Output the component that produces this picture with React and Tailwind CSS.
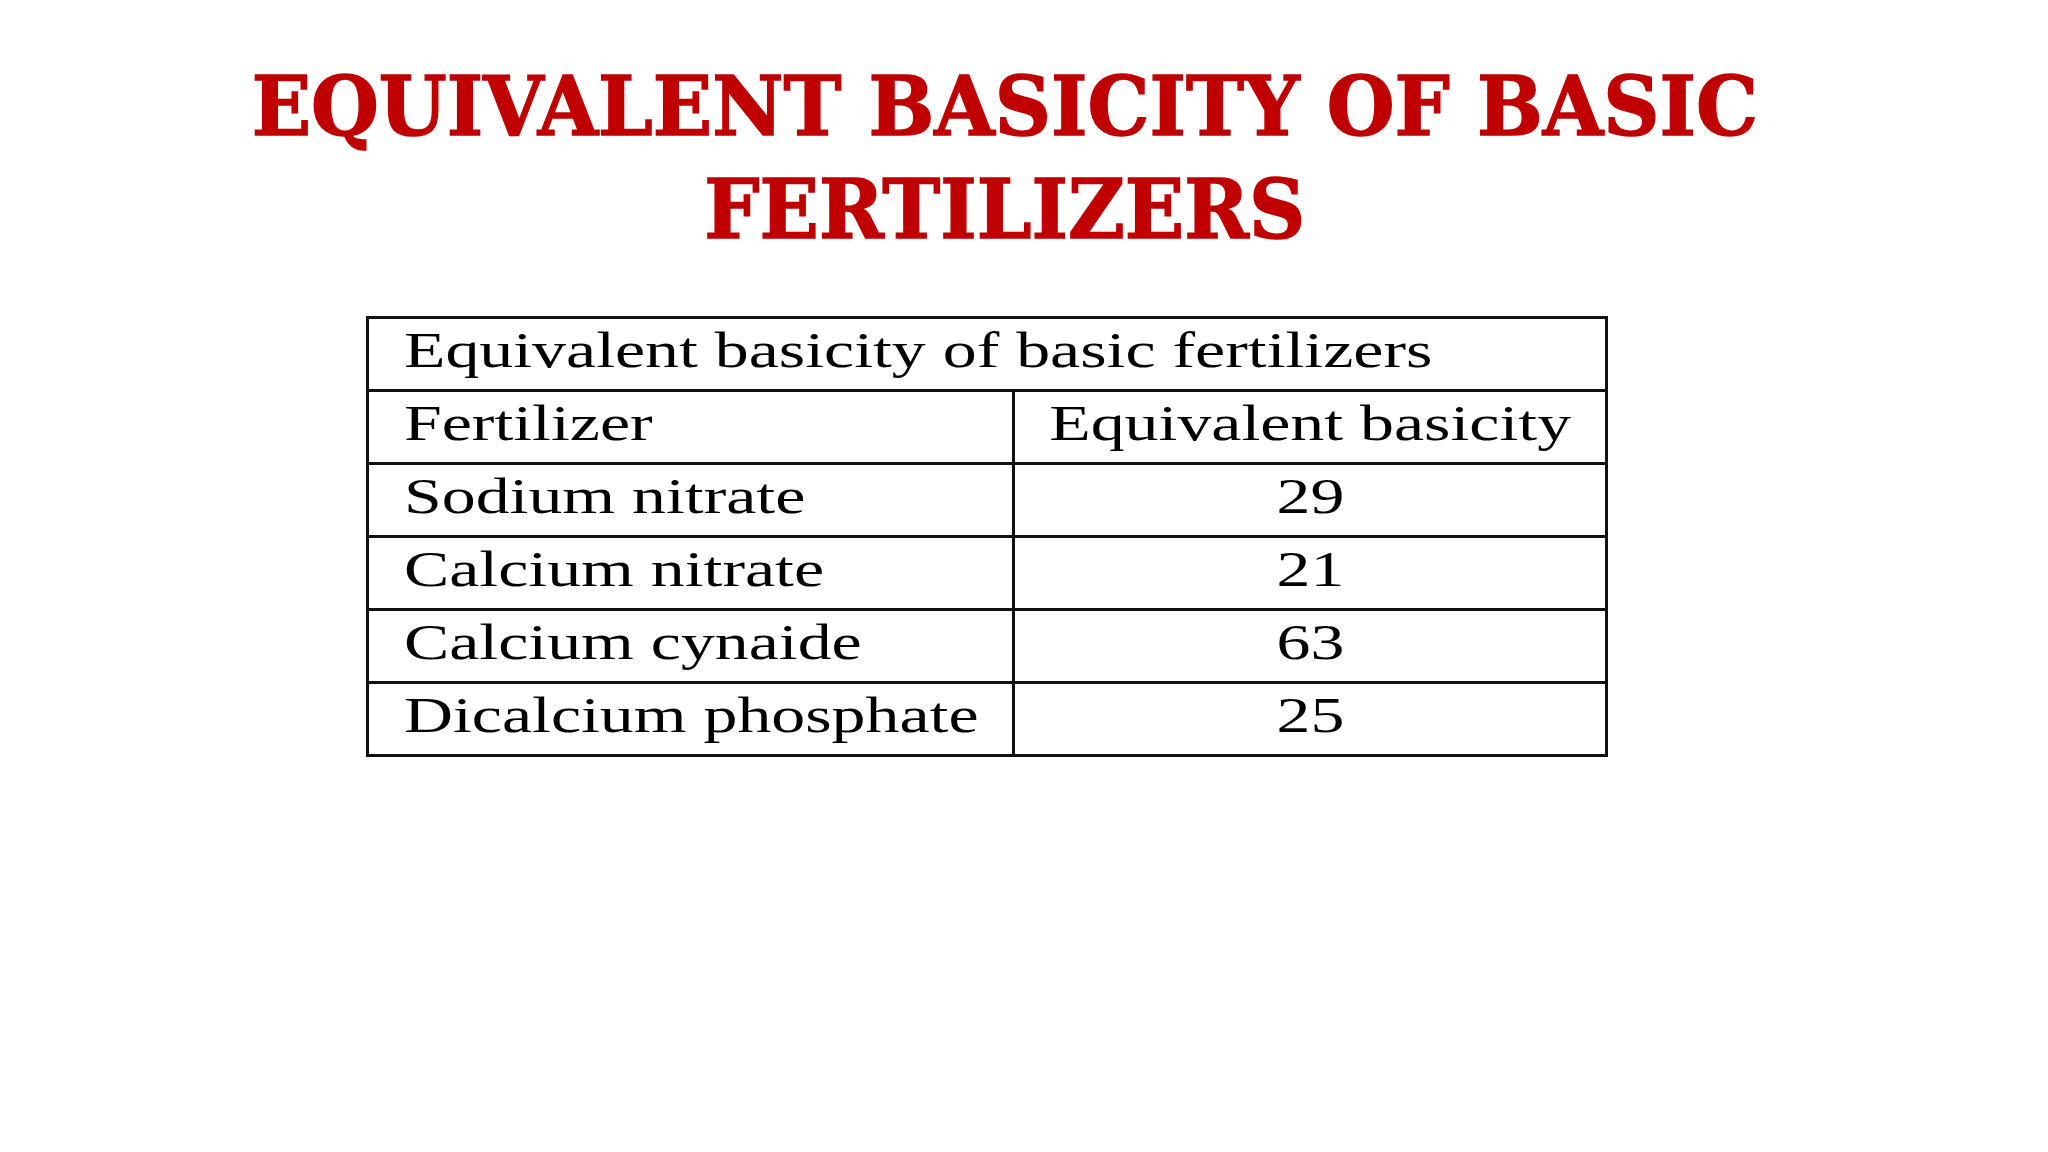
export default function App() {
  const rows = [
    ["Sodium nitrate", "29"],
    ["Calcium nitrate", "21"],
    ["Calcium cynaide", "63"],
    ["Dicalcium phosphate", "25"],
  ];

  const cell = "h-[73px] border-[3px] border-[#111] align-top pt-[6px] leading-[51px]";

  return (
    <div className="w-[2048px] h-[1152px] bg-white overflow-hidden">
      <div className="w-[2010px] pt-[55px] text-center">
        <h1 className="inline-block scale-x-[0.95] origin-center font-['DejaVu_Serif',serif] font-bold text-[82px] leading-[103px] text-[#c00000] [-webkit-text-stroke:1.5px_#c00000]">
          EQUIVALENT BASICITY OF BASIC
          <br />
          FERTILIZERS
        </h1>
      </div>

      <div className="mt-[55px] ml-[366px]">
        <table className="w-[1242px] border-collapse font-['Liberation_Serif',serif] text-[51px] text-black">
          <tbody>
            <tr>
              <td colSpan={2} className={`${cell} pl-[35px]`}>
                <span className="inline-block scale-x-[1.33] origin-left whitespace-nowrap">
                  Equivalent basicity of basic fertilizers
                </span>
              </td>
            </tr>
            <tr>
              <td className={`${cell} w-[646px] pl-[35px]`}>
                <span className="inline-block scale-x-[1.33] origin-left">Fertilizer</span>
              </td>
              <td className={`${cell} text-center`}>
                <span className="inline-block scale-x-[1.33] origin-center whitespace-nowrap">
                  Equivalent basicity
                </span>
              </td>
            </tr>
            {rows.map(([name, value]) => (
              <tr key={name}>
                <td className={`${cell} pl-[35px]`}>
                  <span className="inline-block scale-x-[1.33] origin-left whitespace-nowrap">{name}</span>
                </td>
                <td className={`${cell} text-center`}>
                  <span className="inline-block scale-x-[1.33] origin-center">{value}</span>
                </td>
              </tr>
            ))}
          </tbody>
        </table>
      </div>
    </div>
  );
}
